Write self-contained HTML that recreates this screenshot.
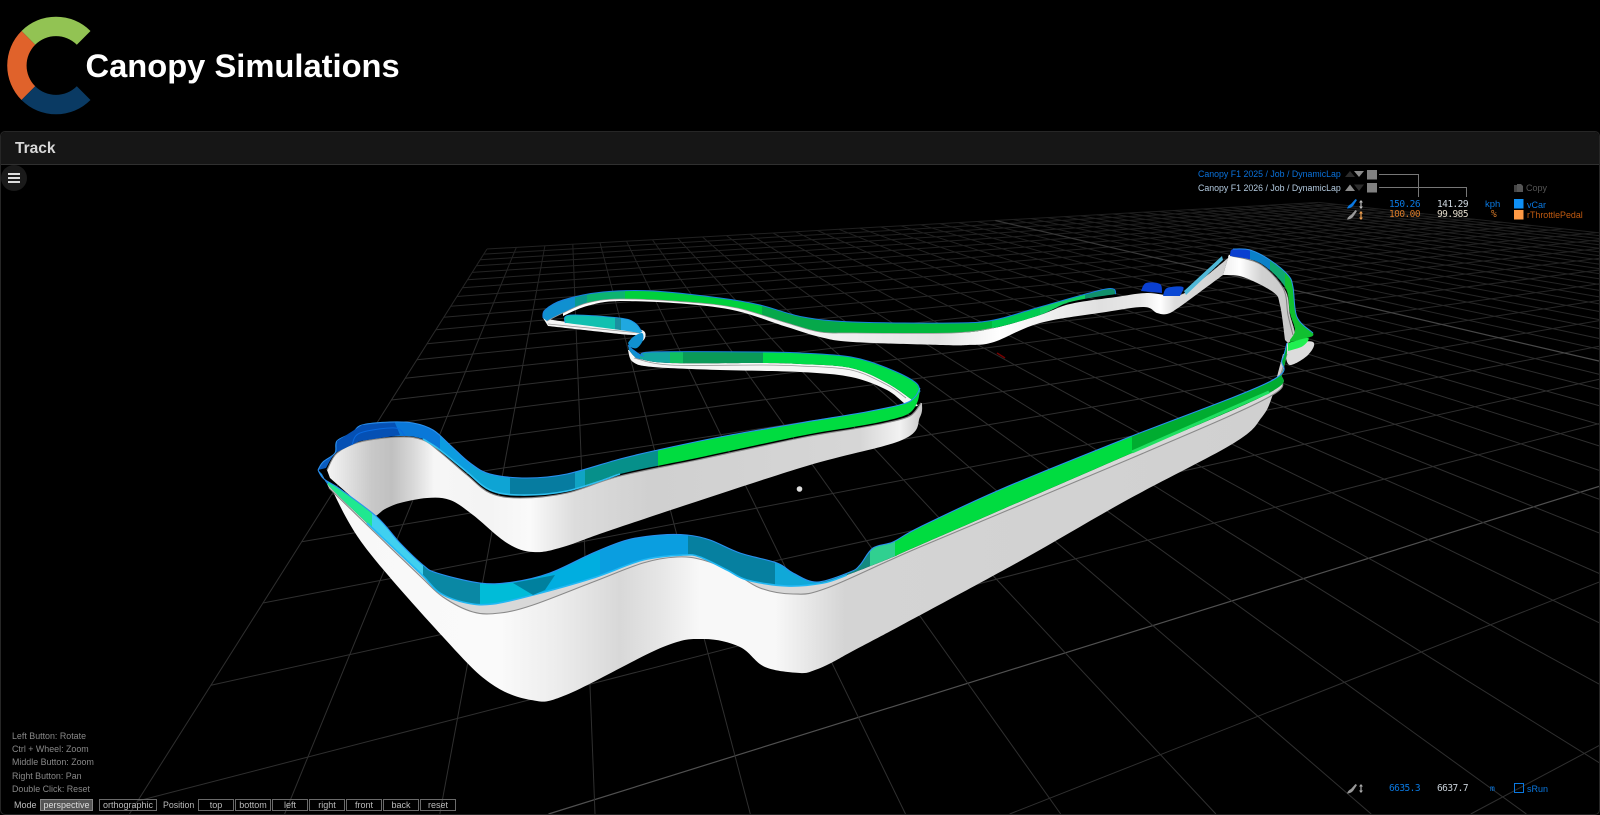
<!DOCTYPE html>
<html><head><meta charset="utf-8"><title>Canopy Simulations</title>
<style>
html,body{margin:0;padding:0;width:1600px;height:815px;background:#000;overflow:hidden;font-family:"Liberation Sans",sans-serif}
.t{position:absolute;white-space:nowrap;line-height:12px;font-size:9px}
.m{font-family:"DejaVu Sans Mono","Liberation Mono",monospace;font-size:9.500px;letter-spacing:-.55px}
.b{position:absolute;box-sizing:border-box;border:1px solid #6a6a6a;height:12px;line-height:11px;top:799px;text-align:center;font-size:9px;color:#bbb}
#title{position:absolute;left:85.500px;top:46px;font-size:32.700px;font-weight:bold;color:#fff;line-height:40px;white-space:nowrap}
#panel{position:absolute;left:0;top:131px;width:1600px;height:684px;box-sizing:border-box;border:1px solid #262626;border-radius:5px;overflow:hidden}
#head{position:absolute;left:0;top:0;right:0;height:32px;background:#161616;border-bottom:1px solid #303030;border-radius:4px 4px 0 0}
#track{position:absolute;left:14px;top:8px;font-size:15.500px;font-weight:bold;color:#d8d8d8;line-height:18px}
svg{position:absolute;left:0;top:0;overflow:hidden}
</style></head>
<body>
<svg id="s" width="1600" height="815" viewBox="0 0 1600 815"></svg>

<svg width="120" height="125" viewBox="0 0 120 125">
<path fill="#92c353" d="M21.500 31A48.800 48.800 0 0 1 90.500 31L76.800 44.700A29.400 29.400 0 0 0 35.200 44.700Z"/>
<path fill="#e0622b" d="M21.500 31A48.800 48.800 0 0 0 21.500 100L35.200 86.300A29.400 29.400 0 0 1 35.200 44.700Z"/>
<path fill="#0a3a63" d="M21.500 100A48.800 48.800 0 0 0 90.500 100L76.800 86.300A29.400 29.400 0 0 1 35.200 86.300Z"/>
</svg>
<div id="title">Canopy Simulations</div>
<div id="panel"><div id="head"><div id="track">Track</div></div></div>

<svg width="1600" height="815" viewBox="0 0 1600 815" style="pointer-events:none">
<circle cx="14" cy="178" r="13" fill="#1a1a1a"/>
<rect x="8" y="173" width="12" height="2" fill="#ddd"/><rect x="8" y="177" width="12" height="2" fill="#ddd"/><rect x="8" y="181" width="12" height="2" fill="#ddd"/>
<path d="M1345 177L1350 171L1355 177Z" fill="#2c2c2c"/><path d="M1354 171H1364L1359 177Z" fill="#8a8a8a"/>
<path d="M1345 191L1350 184.500L1355 191Z" fill="#8a8a8a"/><path d="M1354 184.500H1364L1359 191Z" fill="#2c2c2c"/>
<rect x="1367" y="170" width="10" height="9.500" fill="#808080"/><rect x="1367" y="183" width="10" height="9.500" fill="#808080"/>
<path d="M1379 174.500H1418.500V197M1379 187.500H1466.500V197" fill="none" stroke="#777" stroke-width="1"/>
<path d="M1517 184h4l2 2v6h-6z" fill="#555"/><path d="M1514 185h3v7h-3z" fill="#444"/>
<path d="M1347 208.500C1348 206 1349 205 1351 204L1355.500 199L1357 200L1353 206C1351 208 1349 208.500 1347 208.500Z" fill="#0a78e0"/>
<path d="M1347 219.500C1348 217 1349 216 1351 215L1355.500 210L1357 211L1353 217C1351 219 1349 219.500 1347 219.500Z" fill="#999"/>
<path d="M1361 202v5" stroke="#bbb" stroke-width="1.200"/><path d="M1359 202.500L1361 200L1363 202.500ZM1359 206.500L1361 209L1363 206.500Z" fill="#bbb"/>
<path d="M1361 213v5" stroke="#f0a050" stroke-width="1.200"/><path d="M1359 213.500L1361 211L1363 213.500ZM1359 217.500L1361 220L1363 217.500Z" fill="#f0a050"/>
<rect x="1514" y="199" width="9.500" height="9.500" fill="#0f90f5"/><rect x="1514" y="210" width="9.500" height="9.500" fill="#ff9a45"/>
<path d="M1347 793.500C1348 791 1349 790 1351 789L1355.500 784L1357 785L1353 791C1351 793 1349 793.500 1347 793.500Z" fill="#999"/>
<path d="M1361 786v5" stroke="#aaa" stroke-width="1.200"/><path d="M1359 786.500L1361 784L1363 786.500ZM1359 790.500L1361 793L1363 790.500Z" fill="#aaa"/>
<rect x="1514.500" y="783.500" width="9" height="9" fill="none" stroke="#0a78e0" stroke-width="1"/>
</svg>

<div class="t" style="left:1198px;top:168px;color:#0a72dc;font-size:8.800px">Canopy F1 2025 / Job / DynamicLap</div>
<div class="t" style="left:1198px;top:182px;color:#b4cbe0;font-size:8.800px">Canopy F1 2026 / Job / DynamicLap</div>
<div class="t" style="left:1526px;top:182px;color:#555">Copy</div>

<div class="t m" style="left:1389px;top:198.500px;color:#0a78e0">150.26</div>
<div class="t m" style="left:1437px;top:198.500px;color:#cfd8e0">141.29</div>
<div class="t" style="left:1485px;top:198.500px;color:#0a78e0;font-size:9.500px">kph</div>
<div class="t" style="left:1527px;top:198.500px;color:#0a78e0">vCar</div>
<div class="t m" style="left:1389px;top:209px;color:#d87a28">100.00</div>
<div class="t m" style="left:1437px;top:209px;color:#e0d8c8">99.985</div>
<div class="t m" style="left:1491px;top:209px;color:#d87a28">%</div>
<div class="t" style="left:1527px;top:209px;color:#c05a10;font-size:8.900px">rThrottlePedal</div>

<div class="t m" style="left:1389px;top:783px;color:#0a78e0">6635.3</div>
<div class="t m" style="left:1437px;top:783px;color:#c8d0d8">6637.7</div>
<div class="t m" style="left:1490px;top:783px;color:#0a78e0;font-size:8px">m</div>
<div class="t" style="left:1527px;top:783px;color:#0a78e0">sRun</div>

<div class="t" style="left:12px;top:730px;color:#888;font-size:8.900px">Left Button: Rotate</div>
<div class="t" style="left:12px;top:743px;color:#888;font-size:8.900px">Ctrl + Wheel: Zoom</div>
<div class="t" style="left:12px;top:756px;color:#888;font-size:8.900px">Middle Button: Zoom</div>
<div class="t" style="left:12px;top:770px;color:#888;font-size:8.900px">Right Button: Pan</div>
<div class="t" style="left:12px;top:783px;color:#888;font-size:8.900px">Double Click: Reset</div>

<div class="t" style="left:14px;top:799px;color:#bbb">Mode</div>
<div class="b" style="left:40px;width:53px;background:#555;color:#ddd;border-color:#888">perspective</div>
<div class="b" style="left:99px;width:58px">orthographic</div>
<div class="t" style="left:163px;top:799px;color:#bbb;font-size:8.800px">Position</div>
<div class="b" style="left:198px;width:36px">top</div>
<div class="b" style="left:235px;width:36px">bottom</div>
<div class="b" style="left:272px;width:36px">left</div>
<div class="b" style="left:309px;width:36px">right</div>
<div class="b" style="left:346px;width:36px">front</div>
<div class="b" style="left:383px;width:36px">back</div>
<div class="b" style="left:420px;width:36px">reset</div>

<script>
(function(){
var out='',defs='';
/* grid */
var A=[487,249],V1=[2771,121],V2=[568,121],h=121;
function inter(p1,p2,p3,p4){var d=(p1[0]-p2[0])*(p3[1]-p4[1])-(p1[1]-p2[1])*(p3[0]-p4[0]);
 var u=p1[0]*p2[1]-p1[1]*p2[0],v=p3[0]*p4[1]-p3[1]*p4[0];
 return [(u*(p3[0]-p4[0])-(p1[0]-p2[0])*v)/d,(u*(p3[1]-p4[1])-(p1[1]-p2[1])*v)/d];}
function ln(p,q,c,w){
 var t0=0,t1=1,dx=q[0]-p[0],dy=q[1]-p[1],P=[-dx,dx,-dy,dy],Q=[p[0],1600-p[0],p[1],814-p[1]];
 for(var n=0;n<4;n++){if(P[n]==0){if(Q[n]<0)return;continue;}var r=Q[n]/P[n];
  if(P[n]<0){if(r>t1)return;if(r>t0)t0=r;}else{if(r<t0)return;if(r<t1)t1=r;}}
 out+='<line x1="'+(p[0]+t0*dx).toFixed(1)+'" y1="'+(p[1]+t0*dy).toFixed(1)+'" x2="'+(p[0]+t1*dx).toFixed(1)+'" y2="'+(p[1]+t1*dy).toFixed(1)+'" stroke="'+c+'" stroke-width="'+(w||1)+'"/>';}
var j,i,B=inter(V2,[130+155*44,813],A,V1);
for(j=0;j<=25;j++){
 var y=h+1/(.0078125-.000302*j),x=V2[0]+(A[0]-V2[0])*(y-h)/(A[1]-h),L=[x,y];
 ln(L,inter(L,V1,V2,B),j==22?'#505050':'#2f2f2f',j==22?1.2:1);
}
for(i=0;i<=44;i++){
 var X=130+155*i,F=inter(V2,[X,813],A,V1);
 ln(F,[V2[0]+(X-V2[0])*(815-h)/692,815],i==22?'#505050':'#2f2f2f',i==22?1.2:1);
}
defs+='<linearGradient id="dim" x1="0" y1="0" x2="0" y2="1"><stop offset="0" stop-color="#000" stop-opacity=".4"/><stop offset="1" stop-color="#000" stop-opacity="0"/></linearGradient>';
out+='<rect x="0" y="190" width="1600" height="200" fill="url(#dim)"/>';
/* helpers */
function f(v){return v.toFixed(1);}
function cr(p,mv){var d=(mv?'M':'L')+p[0][0]+' '+p[0][1];
 for(var n=0;n<p.length-1;n++){var p0=p[n-1]||p[n],p1=p[n],p2=p[n+1],p3=p[n+2]||p2;
  d+='C'+f(p1[0]+(p2[0]-p0[0])/6)+' '+f(p1[1]+(p2[1]-p0[1])/6)+' '+f(p2[0]-(p3[0]-p1[0])/6)+' '+f(p2[1]-(p3[1]-p1[1])/6)+' '+p2[0]+' '+p2[1];}
 return d;}
function shape(u,l,fill){out+='<path d="'+cr(u,1)+cr(l.slice().reverse(),0)+'Z" fill="'+fill+'"/>';}
function stroke(u,c,w){out+='<path d="'+cr(u,1)+'" fill="none" stroke="'+c+'" stroke-width="'+w+'"/>';}
function poly(p,fill){out+='<path d="'+cr(p,1)+'Z" fill="'+fill+'"/>';}
function grad(id,st,hard){var x0=st[0][0],xN=st[st.length-1][0],g='<linearGradient id="'+id+'" gradientUnits="userSpaceOnUse" x1="'+x0+'" y1="0" x2="'+xN+'" y2="0">';
 for(var n=0;n<st.length;n++){var o=(st[n][0]-x0)/(xN-x0);g+='<stop offset="'+o.toFixed(4)+'" stop-color="'+st[n][1]+'"/>';
  if(hard&&n<st.length-1){var o2=(st[n+1][0]-x0)/(xN-x0);g+='<stop offset="'+o2.toFixed(4)+'" stop-color="'+st[n][1]+'"/>';}}
 defs+=g+'</linearGradient>';}

grad('w1',[[327,'#f5f5f5'],[352,'#dcdcdc'],[372,'#c8c8c8'],[392,'#c0c0c0'],[413,'#d8d8d8'],[434,'#f6f6f6'],[490,'#f4f4f4'],[530,'#fafafa'],[575,'#dcdcdc'],[650,'#d0d0d0'],[860,'#d6d6d6'],[900,'#f2f2f2'],[922,'#c8c8c8']]);
grad('w2',[[332,'#f8f8f8'],[500,'#fafafa'],[560,'#ececec'],[620,'#d8d8d8'],[660,'#e6e6e6'],[700,'#f8f8f8'],[775,'#f8f8f8'],[845,'#d4d4d4'],[1287,'#d0d0d0']]);
grad('wc',[[560,'#fff'],[800,'#f4f4f4'],[940,'#e4e4e4'],[1000,'#fff'],[1100,'#e0e0e0'],[1140,'#e8e8e8'],[1160,'#fff'],[1175,'#ddd'],[1225,'#d0d0d0']]);
grad('wr',[[1223,'#eee'],[1240,'#fff'],[1262,'#d0d0d0'],[1295,'#c8c8c8']]);
grad('bb',[[318,'#0a5cc0'],[395,'#0a78d8'],[440,'#0c9ce0'],[470,'#0ea4d4'],[510,'#067ca0'],[575,'#10a4c4'],[585,'#06908a'],[658,'#00dc40'],[920,'#00dc40']],true);
grad('bf',[[318,'#1a90e8'],[328,'#20e890'],[372,'#40d0f0'],[423,'#0a88a4'],[480,'#00bcd8'],[540,'#00aee0'],[600,'#0a9ee0'],[688,'#0680a0'],[775,'#10a8d8'],[820,'#128a80'],[870,'#30d090'],[895,'#00dc40'],[1132,'#00ac30'],[1287,'#00ac30']],true);
grad('bc',[[543,'#1090d0'],[575,'#0a9a90'],[587,'#0cb470'],[625,'#00d03c'],[762,'#06a84a'],[840,'#00b83c'],[992,'#00cc50'],[1040,'#10d060'],[1085,'#10906a'],[1116,'#10906a']],true);
grad('be',[[628,'#1090d0'],[640,'#12a6a0'],[670,'#10c060'],[683,'#0a9a58'],[763,'#00dc48'],[920,'#00dc48']],true);
grad('bd',[[565,'#10c0b0'],[615,'#1a90a0'],[621,'#20a8e0'],[642,'#20a8e0']],true);
grad('br',[[1230,'#0a3fd0'],[1250,'#0a80c8'],[1270,'#10a870'],[1285,'#10c030'],[1313,'#10c030']],true);

var backTop=[[318,470],[323,462],[335,453],[337,441],[352,433],[362,425],[390,422],[413,423],[433,430],[450,445],[470,463],[490,474],[527,478],[567,474],[620,459],[658,450],[720,437],[800,423],[866,412],[903,404],[915,397],[920,388]];
var backBot=[[326,468],[337,452],[360,441],[400,436],[423,439],[440,450],[467,472],[490,490],[520,495],[567,491],[620,474],[697,458],[800,436],[853,427],[885,421],[908,414],[917,403],[920,390]];
var w1Top=[[327,470],[337,453],[360,442],[400,437],[423,440],[440,452],[467,475],[490,493],[520,498],[567,493],[620,476],[697,460],[800,438],[853,429],[885,423],[910,416],[921,403]];
var w1Bot=[[330,478],[355,500],[372,516],[385,509],[400,503],[427,498],[450,500],[473,515],[507,543],[533,552],[563,547],[620,527],[800,468],[902,440],[920,417],[922,403]];
var fTop=[[318,470],[324,479],[340,489],[377,517],[400,543],[423,565],[437,573],[480,583],[513,582],[550,573],[593,553],[627,540],[660,535],[687,535],[710,540],[740,553],[777,563],[793,573],[817,582],[850,572],[860,565],[873,548],[893,542],[920,527],[1004,488],[1127,438],[1269,382],[1282,360],[1287,343]];
var fBot=[[322,474],[330,487],[367,523],[420,573],[440,593],[467,603],[493,604],[533,595],[593,578],[643,560],[683,555],[700,557],[727,570],[747,580],[787,586],[823,583],[847,575],[893,557],[920,545],[1132,453],[1269,393],[1282,373],[1287,353]];
var fwTop=[[329,488],[367,525],[420,576],[443,597],[473,612],[500,613],[533,605],[593,582],[643,563],[677,557],[703,560],[733,572],[760,588],[793,594],[827,588],[920,547],[1132,458],[1269,397],[1280,376],[1287,354]];
var fwBot=[[332,490],[365,547],[444,638],[490,683],[531,700],[566,695],[663,647],[704,639],[740,647],[765,667],[800,673],[815,670],[831,663],[851,652],[900,626],[1022,560],[1127,500],[1234,443],[1262,417],[1272,397],[1277,377],[1283,354]];
var cTop=[[543,318],[545,310],[563,300],[603,292],[653,291],[720,298],[760,305],[803,317],[853,322],[953,323],[994,320],[1040,307],[1106,289],[1116,294]];
var cBot=[[547,321],[563,313],[587,303],[620,299],[687,302],[737,308],[787,323],[820,332],[853,333],[953,333],[994,328],[1040,315],[1070,302],[1116,294]];
var cwTop=[[563,313],[587,303],[620,299],[687,302],[737,308],[787,323],[820,332],[853,333],[953,333],[994,328],[1040,315],[1070,304],[1116,297],[1147,293],[1180,295],[1205,277],[1228,258]];
var cwBot=[[563,316],[587,306],[620,301],[687,304],[737,311],[787,327],[820,337],[853,342],[940,345],[968,345],[994,342],[1040,323],[1106,312],[1144,307],[1157,313],[1167,314],[1178,308],[1200,292],[1223,275]];
var eTop=[[628,345],[632,349],[643,356],[652,352],[763,352],[800,353],[851,357],[887,368],[915,382],[920,392]];
var eBot=[[629,350],[634,356],[640,359],[670,363],[763,363],[800,364],[851,368],[887,383],[915,402]];
var eW=[[628,350],[633,362],[653,367],[720,370],[800,372],[851,377],[887,390],[907,405],[918,406]];

/* far walls */
shape(cwTop,cwBot,'url(#wc)');
shape([[1228,258],[1232,255],[1260,264],[1285,290],[1290,315],[1295,335],[1288,343]],[[1223,275],[1243,277],[1273,292],[1280,305],[1285,340]],'url(#wr)');
stroke([[1232,256],[1260,264],[1283,288],[1288,315],[1293,335]],'#808080',1);
poly([[1287,343],[1313,342],[1308,355],[1290,365],[1285,353]],'#dcdcdc');
/* chicane wall */
shape([[543,318],[560,321],[620,328],[642,330],[645,338],[636,347]],[[548,326],[620,334],[638,336],[634,343],[628,347]],'#f4f4f4');
stroke([[548,324],[620,331],[640,333]],'#999',.8);
/* strip under E */
shape(eBot,eW,'#f6f6f6');
stroke([[634,358],[670,365],[763,365],[800,366],[851,370],[887,385],[906,398]],'#999',.8);
/* bands far */
shape(cTop,cBot,'url(#bc)');
stroke(cTop,'#1a80e0',1);
stroke(cBot.slice(0,11),'#999',.7);
shape([[565,323],[570,315],[620,318],[635,323],[642,332]],[[567,323],[620,330],[640,333]],'url(#bd)');
stroke([[565,323],[570,315],[620,318],[635,323],[642,332]],'#1a90e8',.8);
poly([[628,343],[633,337],[642,333],[643,340],[637,348],[630,347]],'#1090d0');
/* tabs */
poly([[1141,291],[1146,283],[1160,284],[1162,293]],'#0a3fd0');
poly([[1163,296],[1167,288],[1183,287],[1180,296]],'#0a48d4');
out+='<path d="M1184 291L1222 256L1223 260L1186 295Z" fill="#50b8d8"/>';
/* wall 1 */
shape(w1Top,w1Bot,'url(#w1)');
stroke(w1Top,'#8a8a8a',1.1);
/* E band */
shape(eTop,eBot,'url(#be)');
stroke(eTop,'#1a80e0',1);
/* back band */
shape(backTop,backBot,'url(#bb)');
stroke(backTop,'#2a90f0',1.1);
out+='<path d="M337 441L337 452L360 441L400 435L395 423L362 425Z" fill="#0550b4"/>';
stroke([[352,445],[360,433],[395,428],[405,436]],'#0a6ae0',1);
stroke([[423,439],[440,450],[467,472],[490,490],[520,495],[567,491],[620,474]],'#30c0f0',1.6);
/* right band */
shape([[1230,255],[1233,249],[1250,250],[1270,260],[1288,275],[1293,287],[1297,317],[1313,333],[1307,338],[1290,342]],[[1230,256],[1260,263],[1285,287],[1290,313],[1295,330],[1290,340]],'url(#br)');
stroke([[1233,249],[1250,250],[1270,260],[1288,275],[1293,287],[1297,317],[1313,333]],'#2a90e8',1);
poly([[1288,343],[1308,338],[1303,346],[1288,351]],'#20f050');
/* front wall */
shape(fwTop,fwBot,'url(#w2)');
shape(fBot,fwTop,'#d8d8d8');
stroke(fwTop,'#8a8a8a',1.1);
shape(fTop,fBot,'url(#bf)');
stroke(fTop,'#2a90f0',1.1);
stroke([[367,523],[420,573],[440,593],[467,603],[493,604],[533,595],[593,578],[643,560],[683,555],[700,557],[727,570],[747,580],[787,586],[823,583],[847,575]],'#22b8f4',1.6);
stroke([[1132,452],[1269,392]],'#20e060',3);
out+='<path d="M513 583L533 595L545 590L555 575Z" fill="#00809e"/>';
/* misc */
out+='<circle cx="799.500" cy="489" r="2.800" fill="#ddd"/><path d="M997 353L1005 358" stroke="#700" stroke-width="1.500"/>';
document.getElementById('s').innerHTML='<defs>'+defs+'</defs>'+out;
})();
</script>
</body></html>
